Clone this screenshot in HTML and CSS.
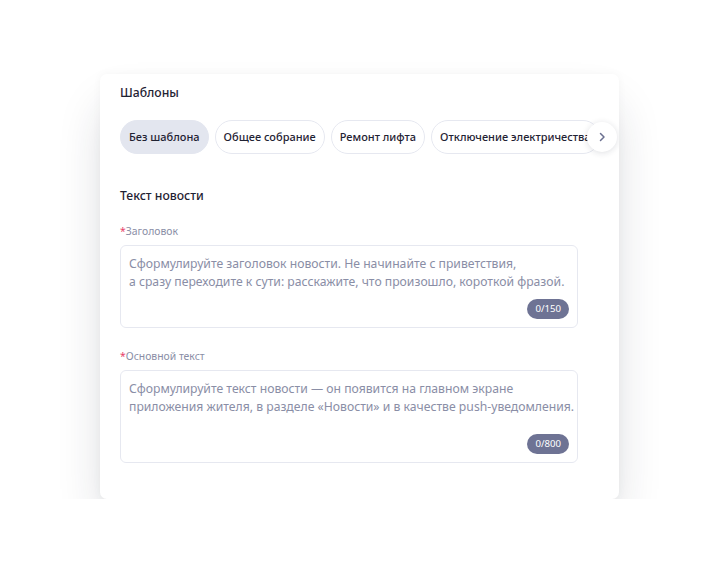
FILE: index.html
```
<!DOCTYPE html>
<html lang="ru">
<head>
<meta charset="utf-8">
<link rel="stylesheet" href="styles.css">
</head>
<body>
<div class="card">
  <div class="section-title">Шаблоны</div>
  <div class="chips-wrap">
    <div class="chips">
      <span class="chip chip-active">Без шаблона</span>
      <span class="chip">Общее собрание</span>
      <span class="chip">Ремонт лифта</span>
      <span class="chip">Отключение электричества</span>
    </div>
    <button class="chips-next" aria-label="Далее">
      <svg width="12" height="12" viewBox="0 0 12 12"><path d="M4.5 2.5 L8 6 L4.5 9.5" fill="none" stroke="#6b7090" stroke-width="1.5" stroke-linecap="round" stroke-linejoin="round"/></svg>
    </button>
  </div>

  <div class="section-title section-gap">Текст новости</div>

  <div class="field">
    <div class="label"><span class="req">*</span>Заголовок</div>
    <div class="input input-title">
      <div class="placeholder">Сформулируйте заголовок новости. Не начинайте с приветствия,<br>а сразу переходите к сути: расскажите, что произошло, короткой фразой.</div>
      <span class="counter">0/150</span>
    </div>
  </div>

  <div class="field">
    <div class="label"><span class="req">*</span>Основной текст</div>
    <div class="input input-body">
      <div class="placeholder">Сформулируйте текст новости — он появится на главном экране<br>приложения жителя, в разделе «Новости» и в качестве push-уведомления.</div>
      <span class="counter">0/800</span>
    </div>
  </div>
</div>
</body>
</html>
```
FILE: styles.css
```
* { box-sizing: border-box; }
html, body {
  margin: 0;
  background: #ffffff;
  font-family: "Noto Sans", "Open Sans", sans-serif;
  color: #1f2233;
}
body { padding: 74px 0 0 100px; }
.card {
  width: 519px;
  height: 425px;
  background: #fff;
  border-radius: 7px;
  padding: 10px 41px 0 20px;
  box-shadow: 0 28px 46px -8px rgba(30, 35, 55, 0.2), 0 0 8px rgba(30, 35, 55, 0.04);
  overflow: hidden;
}
.section-title {
  font-size: 12.2px;
  line-height: 18px;
  font-weight: 500;
  color: #1f2233;
}
.section-gap { margin-top: 33px; }
.chips-wrap {
  position: relative;
  margin-top: 18px;
  margin-right: -39px;
  height: 34px;
}
.chips {
  display: flex;
  gap: 6px;
  overflow: hidden;
  white-space: nowrap;
}
.chip {
  flex: none;
  height: 34px;
  line-height: 32px;
  padding: 0 8px;
  border: 1px solid #e6e8f0;
  border-radius: 17px;
  font-size: 11px;
  font-weight: 500;
  color: #1f2233;
  background: #fff;
}
.chip-active {
  background: #e3e6ef;
  border-color: #e3e6ef;
}
.chips-next {
  position: absolute;
  right: 0;
  top: 2px;
  width: 30px;
  height: 30px;
  border-radius: 50%;
  border: none;
  background: #fff;
  box-shadow: 0 1px 6px rgba(30, 35, 55, 0.14);
  display: flex;
  align-items: center;
  justify-content: center;
  padding: 0;
}
.field { margin-top: 18px; }
.field + .field { margin-top: 20px; }
.label {
  font-size: 10.4px;
  line-height: 16px;
  color: #8a8ea6;
}
.req { color: #e8436b; }
.input {
  position: relative;
  margin-top: 6px;
  border: 1px solid #e6e8f0;
  border-radius: 6px;
  padding: 9px 8px;
}
.input-title { height: 83px; }
.input-body { height: 93px; }
.placeholder {
  font-size: 12.2px;
  line-height: 18px;
  color: #8a8ea6;
  white-space: nowrap;
}
.counter {
  position: absolute;
  right: 8px;
  bottom: 8px;
  height: 20px;
  line-height: 20px;
  padding: 0 8px;
  border-radius: 10px;
  background: #6e7394;
  color: #fff;
  font-size: 9.6px;
}
```
